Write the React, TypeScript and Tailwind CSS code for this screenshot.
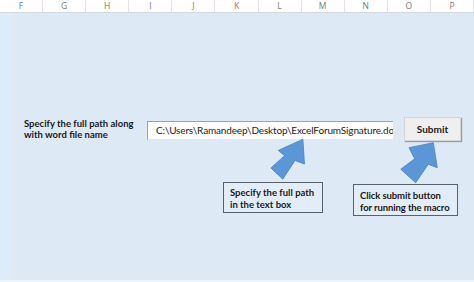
const columns = ['F', 'G', 'H', 'I', 'J', 'K', 'L', 'M', 'N', 'O', 'P']

function BlockArrow({ points, className }: { points: string; className: string }) {
  return (
    <svg width="46" height="48" viewBox="0 0 46 48" className={className}>
      <polygon points={points} fill="#5b97d6" stroke="#4a7fb8" strokeWidth="0.8" strokeLinejoin="miter" />
    </svg>
  )
}

export default function App() {
  return (
    <div className="w-[474px] h-[282px] overflow-hidden bg-[#dde9f5] flex flex-col font-['Lato',sans-serif] text-[#1a1a1a]">
      {/* Column headers */}
      <div className="grid grid-cols-11 h-[13px] bg-white border-b border-[#d5d8dc]">
        {columns.map((c) => (
          <div key={c} className="flex items-center justify-center border-r border-[#e3e3e3] text-[8.5px] leading-none text-[#7a7a7a] font-['Open_Sans',sans-serif]">
            {c}
          </div>
        ))}
      </div>

      {/* Sheet body */}
      <div className="flex flex-1">
        <div className="w-[13px] bg-[#dcecfa] border-r-2 border-[#e4e9ee]" />
        <div className="flex-1 flex flex-col pt-[104px] pl-[11px]">
          <div className="flex items-start h-[24px]">
            <p className="w-[123px] text-[9.5px] leading-[11px] font-bold pt-[1px]">
              Specify the full path along
              <br />
              with word file name
            </p>
            <div className="mt-[4px] w-[246px] h-[19px] bg-white border-t border-l border-[#9ea3a8] border-b border-b-[#e8e8e8] overflow-hidden whitespace-nowrap pl-[8px] text-[10px] leading-[17px] tracking-[-0.15px] text-[#222]">
              C:\Users\Ramandeep\Desktop\ExcelForumSignature.docx
            </div>
            <button className="ml-[11px] w-[57px] h-[24px] bg-[#efefef] border border-[#d4d4d4] shadow-[1px_1px_1px_#9c9c9c] text-[10px] font-bold leading-none">
              Submit
            </button>
          </div>

          {/* Callouts */}
          <div className="flex items-start ml-[199px]">
            <div className="flex flex-col w-[100px]">
              <BlockArrow
                className="ml-[39px] -mt-[5px] h-[46px]"
                points="41.7,3.3 43.3,29.3 33.5,25.5 20.7,45 8.3,33.3 22.5,20.5 16,15"
              />
              <div className="h-[31px] bg-[#e2edf8] border border-[#56616c] px-[6px] pt-[4px] text-[9.5px] leading-[12px] font-bold whitespace-nowrap">
                Specify the full path
                <br />
                in the text box
              </div>
            </div>
            <div className="flex flex-col w-[105px] ml-[30px]">
              <BlockArrow
                className="ml-[41px] -mt-[5px]"
                points="39.3,6.7 43.3,31.7 34.3,28.3 21.7,46.7 6.7,33.3 20.7,22.7 15,11.7"
              />
              <div className="h-[32px] bg-[#e2edf8] border border-[#56616c] pl-[6px] pt-[5px] text-[9.5px] leading-[12px] font-bold whitespace-nowrap tracking-[-0.1px]">
                Click submit button
                <br />
                for running the macro
              </div>
            </div>
          </div>
        </div>
      </div>
      <div className="h-[2px] bg-[#eef4fa]" />
    </div>
  )
}
